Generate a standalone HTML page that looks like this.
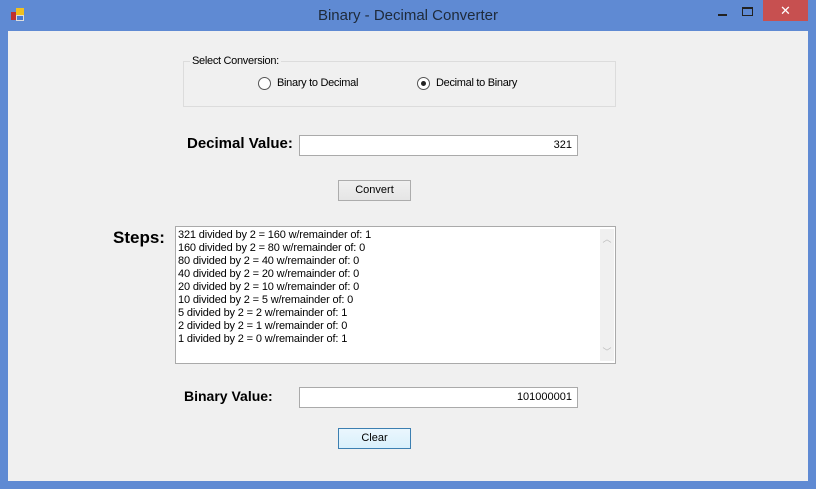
<!DOCTYPE html>
<html><head><meta charset="utf-8"><style>
*{margin:0;padding:0;box-sizing:border-box}
body{width:816px;height:489px;background:#5f8ad3;font-family:"Liberation Sans",sans-serif;position:relative;overflow:hidden;font-size:11px;color:#000}
.a{position:absolute}
.title{left:0;top:7px;width:816px;text-align:center;font-size:15px;color:#1e2a3a}
.client{left:8px;top:31px;width:800px;height:450px;background:#f0f0f0}
.close{left:763px;top:0;width:45px;height:21px;background:#c75050;color:#fff;text-align:center;font-size:13px;line-height:21px}
.tb{background:#fff;border:1px solid #aaa;text-align:right;padding:3px 5px;font-size:11px;height:21px}
.btn{border:1px solid #acacac;background:linear-gradient(#f0f0f0,#e5e5e5);text-align:center;font-size:11px;line-height:19px;height:21px;width:73px}
.radio{width:13px;height:13px;border:1px solid #555;border-radius:50%;background:#fff}
.lbl{font-weight:bold}
.lines div{height:13px;line-height:13px;font-size:11px;letter-spacing:-0.15px;white-space:nowrap}
</style></head><body>
<div class="a" style="left:11px;top:8px;width:14px;height:14px">
<div class="a" style="left:0;top:4px;width:5px;height:8px;background:#c03030"></div>
<div class="a" style="left:5px;top:0;width:8px;height:7px;background:#f0c020"></div>
<div class="a" style="left:5px;top:7px;width:8px;height:6px;background:#4a7ad0;border:1px solid #ddd"></div></div>
<div class="a title">Binary - Decimal Converter</div>
<div class="a" style="left:718px;top:14px;width:9px;height:2px;background:#222"></div>
<div class="a" style="left:742px;top:7px;width:11px;height:9px;border:1px solid #222;border-top-width:2px"></div>
<div class="a close">✕</div>
<div class="a client"></div>
<div class="a" style="left:183px;top:61px;width:433px;height:46px;border:1px solid #dcdcdc"></div>
<div class="a" style="left:190px;top:55px;background:#f0f0f0;padding:0 2px;font-size:11px;letter-spacing:-0.3px">Select Conversion:</div>
<div class="a radio" style="left:258px;top:77px"></div>
<div class="a" style="left:277px;top:77px;letter-spacing:-0.3px">Binary to Decimal</div>
<div class="a radio" style="left:417px;top:77px"><div class="a" style="left:3px;top:3px;width:5px;height:5px;border-radius:50%;background:#222"></div></div>
<div class="a" style="left:436px;top:77px;letter-spacing:-0.3px">Decimal to Binary</div>
<div class="a lbl" style="left:187px;top:135px;font-size:15px">Decimal Value:</div>
<div class="a tb" style="left:299px;top:135px;width:279px">321</div>
<div class="a btn" style="left:338px;top:180px">Convert</div>
<div class="a lbl" style="left:113px;top:228px;font-size:17px">Steps:</div>
<div class="a" style="left:175px;top:226px;width:441px;height:138px;border:1px solid #aaa;background:#fff">
<div class="a" style="left:424px;top:2px;width:14px;height:132px;background:#f0f0f0;color:#bbb;font-size:9px;text-align:center"><div style="margin-top:3px">︿</div><div style="margin-top:100px">﹀</div></div>
<div class="a lines" style="left:2px;top:2px">
<div>321 divided by 2 = 160 w/remainder of: 1</div>
<div>160 divided by 2 = 80 w/remainder of: 0</div>
<div>80 divided by 2 = 40 w/remainder of: 0</div>
<div>40 divided by 2 = 20 w/remainder of: 0</div>
<div>20 divided by 2 = 10 w/remainder of: 0</div>
<div>10 divided by 2 = 5 w/remainder of: 0</div>
<div>5 divided by 2 = 2 w/remainder of: 1</div>
<div>2 divided by 2 = 1 w/remainder of: 0</div>
<div>1 divided by 2 = 0 w/remainder of: 1</div>
</div></div>
<div class="a lbl" style="left:184px;top:388px;font-size:14px">Binary Value:</div>
<div class="a tb" style="left:299px;top:387px;width:279px">101000001</div>
<div class="a btn" style="left:338px;top:428px;border-color:#3c7fb1;background:linear-gradient(#eaf6fd,#d9f0fc)">Clear</div>
</body></html>
